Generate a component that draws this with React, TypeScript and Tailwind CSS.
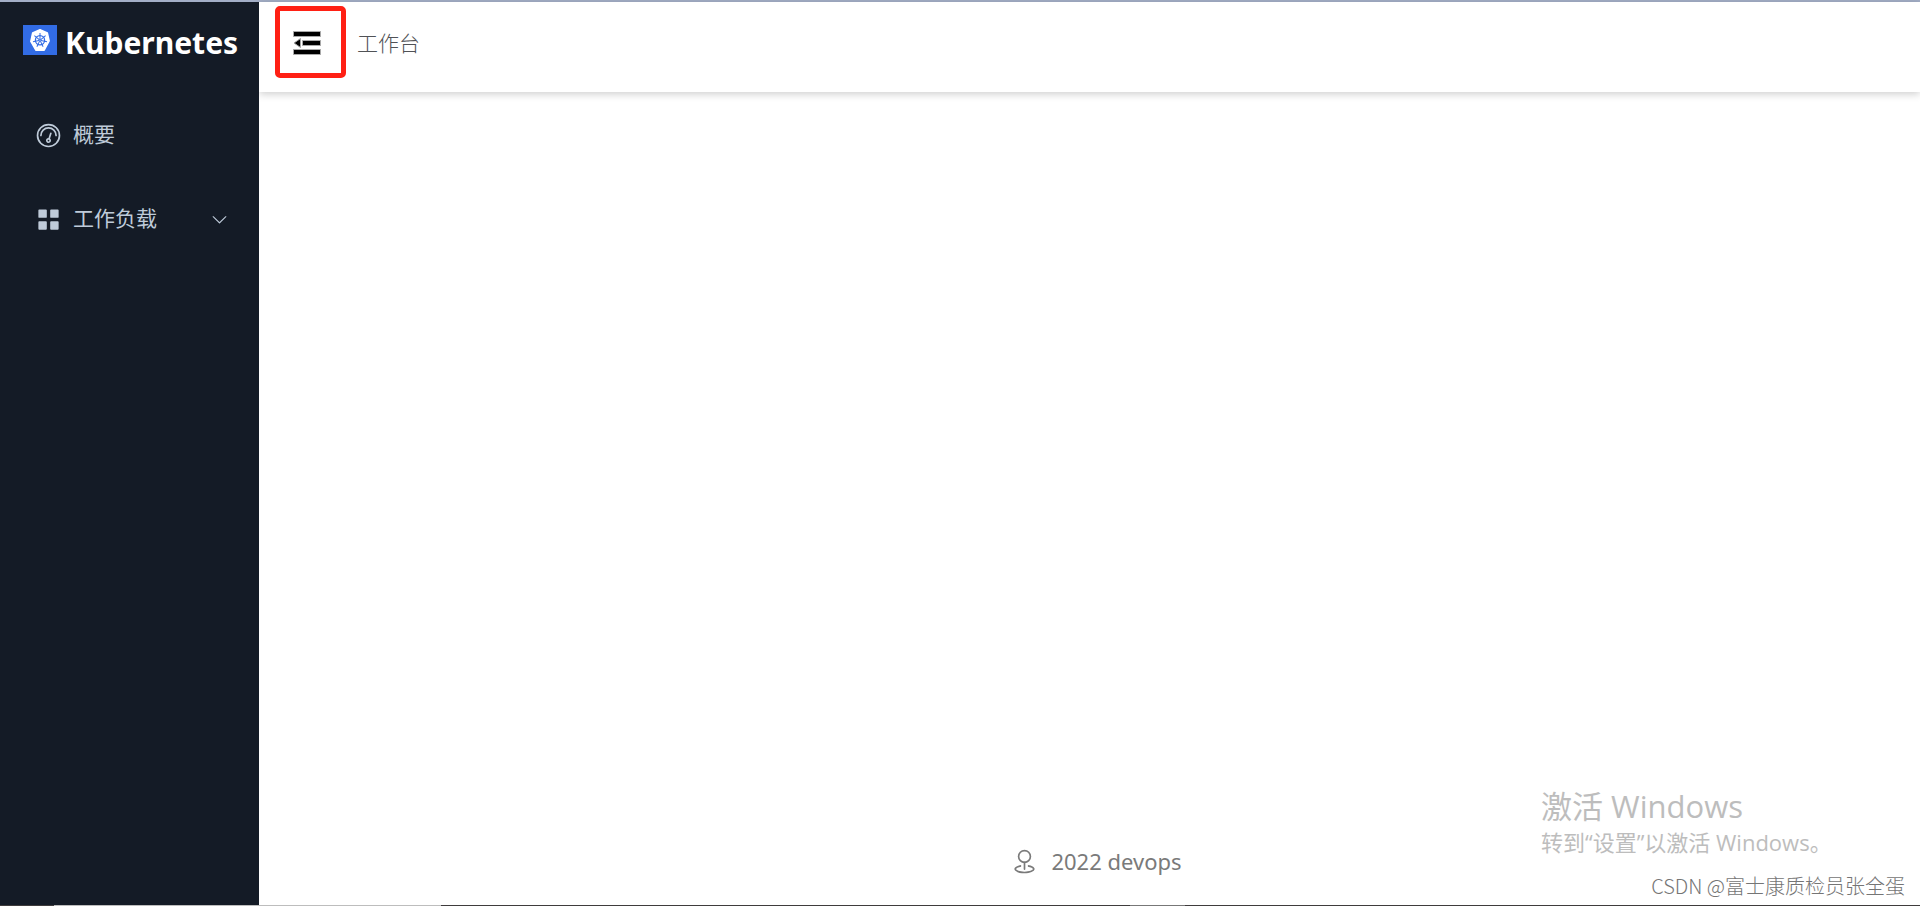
import type { ReactNode } from "react";

function Icon({ className, children }: { className: string; children: ReactNode }) {
  return (
    <svg viewBox="0 0 1024 1024" fill="currentColor" aria-hidden="true" className={className}>
      {children}
    </svg>
  );
}

function KubernetesLogo() {
  const spokes = [0, 1, 2, 3, 4, 5, 6];

  return (
    <svg viewBox="0 0 34 30" aria-hidden="true" className="w-[34px] h-[30px] shrink-0">
      <rect width="34" height="30" fill="#326ce5" />
      <path
        d="M17 4.6 24.4 8 26.2 16 21.2 25.2H12.8L7.8 16.4 9.6 8Z"
        fill="#fff"
        stroke="#fff"
        strokeWidth="1.4"
        strokeLinejoin="round"
      />
      <g stroke="#326ce5" fill="none">
        <circle cx="17" cy="15.2" r="4.6" strokeWidth="1.3" />
        <circle cx="17" cy="15.2" r="1" strokeWidth="1" />
        {spokes.map((n) => (
          <path key={n} d="M17 14.2V8" strokeWidth="1" transform={`rotate(${(n * 360) / 7} 17 15.2)`} />
        ))}
      </g>
    </svg>
  );
}

function Sidebar() {
  return (
    <aside className="relative z-10 w-[259px] shrink-0 bg-[#141b26] text-[#bfcbd9]">
      {/* Logo */}
      <div className="flex items-start gap-2 h-[91px] pl-[23px] pt-[23px]">
        <KubernetesLogo />
        <span className="text-[30px] leading-9 font-bold text-white">Kubernetes</span>
      </div>

      {/* Menu */}
      <nav>
        <a href="#" className="flex items-center h-[84px] pl-[35px] pr-[30px] text-[21px]">
          <Icon className="w-[27px] h-[27px] mr-[11px]">
            <path d="M512 896a384 384 0 1 0 0-768 384 384 0 0 0 0 768zm0 64a448 448 0 1 1 0-896 448 448 0 0 1 0 896z" />
            <path d="M192 512a320 320 0 1 1 640 0 32 32 0 1 1-64 0 256 256 0 1 0-512 0 32 32 0 0 1-64 0z" />
            <path d="M570.432 627.84A96 96 0 1 1 509.568 608l60.992-187.776A32 32 0 1 1 631.424 440l-60.992 187.776zM502.08 734.464a32 32 0 1 0 19.84-60.928 32 32 0 0 0-19.84 60.928z" />
          </Icon>
          概要
        </a>
        <button type="button" className="flex items-center w-full h-[84px] pl-[35px] pr-[30px] text-[21px]">
          <Icon className="w-[27px] h-[27px] mr-[11px]">
            <path d="M160 448a32 32 0 0 1-32-32V160a32 32 0 0 1 32-32h256a32 32 0 0 1 32 32v256a32 32 0 0 1-32 32H160zM608 448a32 32 0 0 1-32-32V160a32 32 0 0 1 32-32h256a32 32 0 0 1 32 32v256a32 32 0 0 1-32 32H608zM160 896a32 32 0 0 1-32-32V608a32 32 0 0 1 32-32h256a32 32 0 0 1 32 32v256a32 32 0 0 1-32 32H160zM608 896a32 32 0 0 1-32-32V608a32 32 0 0 1 32-32h256a32 32 0 0 1 32 32v256a32 32 0 0 1-32 32H608z" />
          </Icon>
          工作负载
          <Icon className="w-[19px] h-[19px] ml-auto">
            <path d="M831.872 340.864 512 652.672 192.128 340.864a30.592 30.592 0 0 0-42.752 0 29.12 29.12 0 0 0 0 41.6L489.664 714.24a32 32 0 0 0 44.672 0l340.288-331.712a29.12 29.12 0 0 0 0-41.728 30.592 30.592 0 0 0-42.752 0z" />
          </Icon>
        </button>
      </nav>
    </aside>
  );
}

function Header() {
  return (
    <header className="flex items-start h-[90px] pl-[16px] pt-1 shadow-[0_2px_8px_rgba(0,0,0,0.2)]">
      <button
        type="button"
        aria-label="收起菜单"
        className="w-[71px] h-[72px] pl-[13px] pt-px border-[5px] border-[#ff2014] rounded-[5px]"
      >
        <svg viewBox="0 0 28 24" aria-hidden="true" className="w-7 h-6">
          <path
            d="M.5 .5H27.5V5.5H.5ZM9.5 9.5H27.5V14.5H9.5ZM.5 18.5H27.5V23.5H.5ZM7.5 7.5V16.5L1 12Z"
            stroke="#a8a8a8"
            strokeWidth="1"
          />
        </svg>
      </button>
      <span className="pl-[11px] pt-[21px] text-[21px] leading-8 font-light text-[#505256]">工作台</span>
    </header>
  );
}

function Footer() {
  return (
    <footer className="flex items-center justify-center gap-[13px] h-[87px] pl-[14px] text-[22px] text-[#7a7a7a]">
      <Icon className="w-[27px] h-[27px]">
        <path d="M512 512a192 192 0 1 0 0-384 192 192 0 0 0 0 384zm0 64a256 256 0 1 1 0-512 256 256 0 0 1 0 512z" />
        <path d="M512 512a32 32 0 0 1 32 32v256a32 32 0 1 1-64 0V544a32 32 0 0 1 32-32z" />
        <path d="M384 649.088v64.96C269.76 732.352 192 771.904 192 800c0 37.696 139.904 96 320 96s320-58.304 320-96c0-28.16-77.76-67.648-192-85.952v-64.96C789.12 671.04 896 730.368 896 800c0 88.32-171.904 160-384 160s-384-71.68-384-160c0-69.696 106.88-128.96 256-150.912z" />
      </Icon>
      2022 devops
    </footer>
  );
}

export default function App() {
  return (
    <div className="relative flex flex-col min-h-screen bg-white border-t-2 border-[#a3aec6] font-['Noto_Sans','Noto_Sans_CJK_SC',sans-serif]">
      <div className="flex flex-1">
        <Sidebar />
        <div className="flex flex-col flex-1 min-w-0">
          <Header />
          <main className="flex-1" />
          <Footer />
        </div>
      </div>

      {/* Taskbar edge */}
      <div className="flex h-px bg-[#3f3c3d]">
        <div className="w-[387px] ml-[54px] bg-[#bdbdbd]" />
        <div className="w-[55px] ml-[689px] bg-[#777777]" />
      </div>

      {/* Watermarks */}
      <div className="absolute right-[92px] bottom-[48px] w-[287px] whitespace-nowrap text-[#bdbdbd] pointer-events-none font-['Open_Sans','Noto_Sans_CJK_SC',sans-serif]">
        <p className="text-[31px] leading-10">激活 Windows</p>
        <p className="text-[22px] leading-8">转到“设置”以激活 Windows。</p>
      </div>
      <p className="absolute right-[15px] bottom-1 text-xl leading-8 font-light text-[#757575] pointer-events-none font-['Noto_Sans_CJK_SC',sans-serif]">
        CSDN @富士康质检员张全蛋
      </p>
    </div>
  );
}
